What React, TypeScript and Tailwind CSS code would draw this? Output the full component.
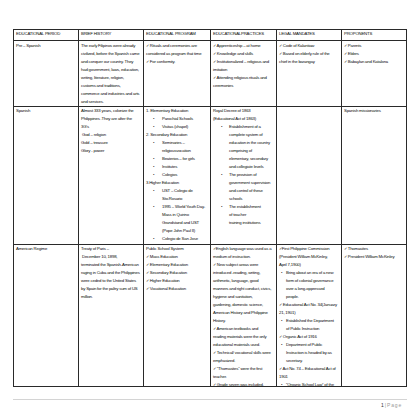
import React from "react";

const L = ({ children }: { children?: React.ReactNode }) => (
  <div className="h-[8px] leading-[8px] whitespace-nowrap">{children}</div>
);

const Lines = ({ items }: { items: string[] }) => (
  <>
    {items.map((t, i) => (
      <L key={i}>{t}</L>
    ))}
  </>
);

const BulProg = ({ items }: { items: string[] }) => (
  <div className="flex">
    <span className="h-[8px] w-[16px] shrink-0 pl-[7px] leading-[8px]">•</span>
    <div>
      <Lines items={items} />
    </div>
  </div>
);

const BulPrac = ({ items }: { items: string[] }) => (
  <div className="flex">
    <span className="h-[8px] w-[16px] shrink-0 pl-[8px] leading-[8px]">•</span>
    <div>
      <Lines items={items} />
    </div>
  </div>
);

const BulLeg = ({ items }: { items: string[] }) => (
  <div className="flex">
    <span className="h-[8px] w-[7px] shrink-0 pl-[2px] leading-[8px]">•</span>
    <div>
      <Lines items={items} />
    </div>
  </div>
);

const Cell = ({ children, first }: { children?: React.ReactNode; first?: boolean }) => (
  <div
    className={
      first
        ? "border-r border-b border-[#2a2a2a] pl-[2px] pt-[1px] overflow-hidden"
        : "border-r border-b border-[#2a2a2a] pl-[2px] overflow-hidden"
    }
  >
    {children}
  </div>
);

export default function App() {
  return (
    <div className="w-[419px] h-[419px] bg-white overflow-hidden text-[#0a0a0a] text-[4.3px] tracking-[-0.2px] font-['Liberation_Sans',sans-serif]">
      <div className="pt-[29px] pl-[13px]">
        <div className="grid w-[394px] grid-cols-[65px_65px_67px_66px_65px_65px] grid-rows-[11px_66px_138px_142px] border-l border-t border-[#2a2a2a]">
          {/* header */}
          <Cell><L>EDUCATIONAL PERIOD</L></Cell>
          <Cell><L>BRIEF HISTORY</L></Cell>
          <Cell><L>EDUCATIONAL PROGRAM</L></Cell>
          <Cell><L>EDUCATIONALPRACTICES</L></Cell>
          <Cell><L>LEGAL MANDATES</L></Cell>
          <Cell><L>PROPONENTS</L></Cell>

          {/* Pre-Spanish */}
          <Cell first><L>Pre – Spanish</L></Cell>
          <Cell first>
            <Lines
              items={[
                "The early Filipinos were already",
                "civilized, before the Spanish came",
                "and conquer our country. They",
                "had government, laws, education,",
                "writing, literature, religion,",
                "customs and traditions,",
                "commerce and industries and arts",
                "and services.",
              ]}
            />
          </Cell>
          <Cell first>
            <Lines
              items={[
                "✓ Rituals and ceremonies are",
                "considered as program that time",
                "✓ For conformity.",
              ]}
            />
          </Cell>
          <Cell first>
            <Lines
              items={[
                "✓ Apprenticeship – at home",
                "✓ Knowledge and skills",
                "✓ Institutionalized – religious and",
                "imitation",
                "✓ Attending religious rituals and",
                "ceremonies",
              ]}
            />
          </Cell>
          <Cell first>
            <Lines
              items={[
                "✓ Code of Kalantiaw",
                "✓ Based on elderly rule of the",
                "chief in the barangay",
              ]}
            />
          </Cell>
          <Cell first>
            <Lines items={["✓ Parents", "✓ Elders", "✓ Babaylan and Katalona"]} />
          </Cell>

          {/* Spanish */}
          <Cell><L>Spanish</L></Cell>
          <Cell>
            <Lines
              items={[
                "Almost 333 years, colonize the",
                "Philippines .They are after the",
                "3G's",
                "\u00A0God – religion",
                "Gold – treasure",
                "Glory - power",
              ]}
            />
          </Cell>
          <Cell>
            <L>1. Elementary Education</L>
            <BulProg items={["Parochial Schools"]} />
            <BulProg items={["Visitas (chapel)"]} />
            <L>2. Secondary Education</L>
            <BulProg items={["Seminaries –", "religiousvocation"]} />
            <BulProg items={["Beaterios – for girls"]} />
            <BulProg items={["Institutes"]} />
            <BulProg items={["Colegios"]} />
            <L>3.Higher Education</L>
            <BulProg items={["UST – Colegio de", "Sto.Rosario"]} />
            <BulProg
              items={["1995 – World Youth Day-", "Mass in Quirino", "Grandstand and UST", "(Pope John Paul II)"]}
            />
            <BulProg items={["Colegio de San Jose"]} />
          </Cell>
          <Cell>
            <L>Royal Decree of 1863</L>
            <L>(Educational Act of 1863)</L>
            <BulPrac
              items={[
                "Establishment of a",
                "complete system of",
                "education in the country",
                "comprising of",
                "elementary, secondary",
                "and collegiate levels",
              ]}
            />
            <BulPrac
              items={["The provision of", "government supervision", "and control of these", "schools"]}
            />
            <BulPrac items={["The establishment", "of teacher", "training institutions"]} />
          </Cell>
          <Cell />
          <Cell><L>Spanish missionaries</L></Cell>

          {/* American */}
          <Cell><L>American Regime</L></Cell>
          <Cell>
            <Lines
              items={[
                "Treaty of Paris –",
                "\u00A0December 10, 1898,",
                "terminated the Spanish-American",
                "raging in Cuba and the Philippines",
                "were ceded to the United States",
                "by Spain for the paltry sum of US",
                "million.",
              ]}
            />
          </Cell>
          <Cell>
            <Lines
              items={[
                "Public School System",
                "✓ Mass Education",
                "✓ Elementary Education",
                "✓ Secondary Education",
                "✓ Higher Education",
                "✓ Vocational Education",
              ]}
            />
          </Cell>
          <Cell>
            <Lines
              items={[
                "✓English language was used as a",
                "medium of instruction.",
                "✓ New subject areas were",
                "introduced -reading, writing,",
                "arithmetic, language, good",
                "manners and right conduct, civics,",
                "hygiene and sanitation,",
                "gardening, domestic science,",
                "American History and Philippine",
                "History.",
                "✓ American textbooks and",
                "reading materials were the only",
                "educational materials used.",
                "✓ Technical/ vocational skills were",
                "emphasized.",
                "✓ \u201CThomasites\u201D were the first",
                "teacher.",
                "✓ Grade seven was included.",
              ]}
            />
          </Cell>
          <Cell>
            <L>✓First Philippine Commission</L>
            <L>(President William McKinley,</L>
            <L>April 7,1900)</L>
            <BulLeg
              items={["Bring about an era of a new", "form of colonial governance", "over a long-oppressed", "people."]}
            />
            <L>✓ Educational Act No. 34(January</L>
            <L>21, 1901)</L>
            <BulLeg items={["Established the Department", "of Public Instruction"]} />
            <L>✓ Organic Act of 1916</L>
            <BulLeg items={["Department of Public", "Instruction is headed by as", "secretary."]} />
            <L>✓ Act No. 74 – Educational Act of</L>
            <L>1901</L>
            <BulLeg items={["\u201COrganic School Law\u201D of the"]} />
          </Cell>
          <Cell>
            <Lines items={["✓ Thomasites", "✓ President William McKinley"]} />
          </Cell>
        </div>

        <div className="mt-[12px] h-px w-[394px] bg-[#d4d4d4]" />
        <div className="flex w-[394px] justify-end pr-[5px] pt-[2px] text-[5px] leading-[7px] tracking-normal">
          <span className="text-[#333]">1</span>
          <span className="px-[1px] text-[#999]">|</span>
          <span className="tracking-[0.8px] text-[#999]">Page</span>
        </div>
      </div>
    </div>
  );
}
